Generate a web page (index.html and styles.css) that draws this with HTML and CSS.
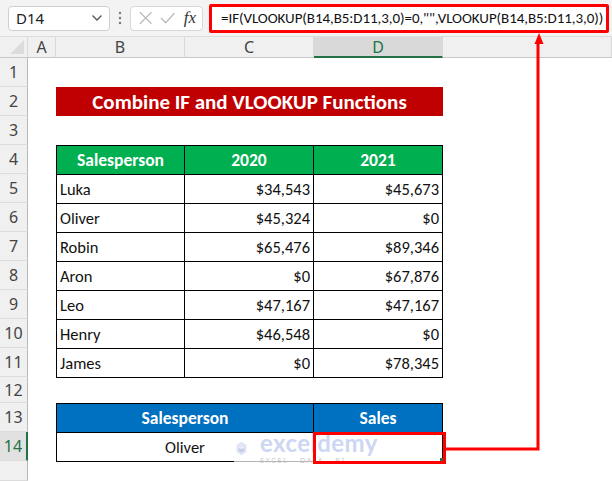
FILE: index.html
```html
<!DOCTYPE html>
<html lang="en">

<head>
  <meta charset="UTF-8">
  <meta name="viewport" content="width=device-width, initial-scale=1.0">
  <title>Combine IF and VLOOKUP Functions</title>
  <link rel="stylesheet" href="styles.css">
</head>

<body>
  <div class="app">
    <div class="toolbar">
      <div class="namebox">
        <span>D14</span>
        <svg width="12" height="8" viewBox="0 0 12 8"><path d="M1.5 1.5 L6 6 L10.5 1.5" fill="none" stroke="#555" stroke-width="1.3"/></svg>
      </div>
      <div class="grip">
        <svg width="4" height="14" viewBox="0 0 4 14"><circle cx="2" cy="2" r="1.2" fill="#777"/><circle cx="2" cy="7" r="1.2" fill="#777"/><circle cx="2" cy="12" r="1.2" fill="#777"/></svg>
      </div>
      <div class="fxbox">
        <svg width="14" height="14" viewBox="0 0 14 14"><path d="M1 1 L13 13 M13 1 L1 13" stroke="#b9b9b9" stroke-width="1.3"/></svg>
        <svg width="16" height="14" viewBox="0 0 16 14"><path d="M1 7 L6 12 L15 2" fill="none" stroke="#b9b9b9" stroke-width="1.3"/></svg>
        <span class="fx">fx</span>
      </div>
      <div class="formula">=IF(VLOOKUP(B14,B5:D11,3,0)=0,"",VLOOKUP(B14,B5:D11,3,0))</div>
    </div>

    <div class="sheet">
      <div class="corner"><svg width="14" height="14" viewBox="0 0 14 14"><path d="M14 0 L14 14 L0 14 Z" fill="#dcdcdc"/></svg></div>
      <div class="col-head">A</div>
      <div class="col-head">B</div>
      <div class="col-head">C</div>
      <div class="col-head active">D</div>
      <div class="col-head"></div>

      <div class="row-head" style="grid-row: 2">1</div>
      <div class="row-head" style="grid-row: 3">2</div>
      <div class="row-head" style="grid-row: 4">3</div>
      <div class="row-head" style="grid-row: 5">4</div>
      <div class="row-head" style="grid-row: 6">5</div>
      <div class="row-head" style="grid-row: 7">6</div>
      <div class="row-head" style="grid-row: 8">7</div>
      <div class="row-head" style="grid-row: 9">8</div>
      <div class="row-head" style="grid-row: 10">9</div>
      <div class="row-head" style="grid-row: 11">10</div>
      <div class="row-head" style="grid-row: 12">11</div>
      <div class="row-head" style="grid-row: 13">12</div>
      <div class="row-head" style="grid-row: 14">13</div>
      <div class="row-head active" style="grid-row: 15">14</div>
      <div class="row-head" style="grid-row: 16"></div>

      <div class="title">Combine IF and VLOOKUP Functions</div>

      <table class="sales">
        <tr><th>Salesperson</th><th>2020</th><th>2021</th></tr>
        <tr><td>Luka</td><td class="num">$34,543</td><td class="num">$45,673</td></tr>
        <tr><td>Oliver</td><td class="num">$45,324</td><td class="num">$0</td></tr>
        <tr><td>Robin</td><td class="num">$65,476</td><td class="num">$89,346</td></tr>
        <tr><td>Aron</td><td class="num">$0</td><td class="num">$67,876</td></tr>
        <tr><td>Leo</td><td class="num">$47,167</td><td class="num">$47,167</td></tr>
        <tr><td>Henry</td><td class="num">$46,548</td><td class="num">$0</td></tr>
        <tr><td>James</td><td class="num">$0</td><td class="num">$78,345</td></tr>
      </table>

      <table class="lookup">
        <tr><th class="wide">Salesperson</th><th>Sales</th></tr>
        <tr><td class="center">Oliver</td><td></td></tr>
      </table>
    </div>

    <!-- watermark sits over the lookup row -->
    <div class="watermark">
      <svg width="20" height="27" viewBox="0 0 20 27">
        <path d="M10 1 L19 6.5 L19 20 L10 26 L1 20 L1 6.5 Z" fill="#dfe5f5"/>
        <path d="M10 9 L15 12 L15 18 L10 21 L5 18 L5 12 Z" fill="#c4cde6"/>
        <path d="M10 9 L15 12 L10 15 L5 12 Z" fill="#eef1fa"/>
      </svg>
      <div class="brand">
        <div class="brand-name">exceldemy</div>
        <div class="brand-tag">EXCEL - DATA - BI</div>
      </div>
    </div>

    <div class="fill-handle"></div>
    <div class="callout"></div>
    <svg class="arrow" width="612" height="481" viewBox="0 0 612 481">
      <path d="M446 449 L538 449 L538 42" fill="none" stroke="#ff0000" stroke-width="3"/>
      <path d="M539 33 L543.5 44 L534.5 44 Z" fill="#ff0000"/>
    </svg>
  </div>
</body>

</html>
```

FILE: styles.css
```css
html,
body {
  margin: 0;
  padding: 0;
  background: #fff;
}

.app {
  position: relative;
  width: 612px;
  height: 481px;
  overflow: hidden;
  font-family: Carlito, Lato, "Liberation Sans", sans-serif;
}

/* formula bar */
.toolbar {
  height: 36px;
  box-sizing: border-box;
  padding-left: 8px;
  display: flex;
  align-items: center;
  background: #f3f3f3;
}

.namebox {
  width: 102px;
  height: 25px;
  box-sizing: border-box;
  padding: 0 6px 0 7px;
  display: flex;
  align-items: center;
  justify-content: space-between;
  background: #fff;
  border: 1px solid #cfcfcf;
  border-radius: 4px;
  font: 15px "Noto Sans", sans-serif;
  color: #222;
}

.grip {
  width: 20px;
  display: flex;
  justify-content: center;
}

.fxbox {
  width: 73px;
  height: 25px;
  box-sizing: border-box;
  padding: 0 6px 0 8px;
  display: flex;
  align-items: center;
  gap: 8px;
  background: #fff;
  border: 1px solid #d8d8d8;
  border-radius: 4px;
}

.fx {
  margin-left: auto;
  font: italic 17px "Liberation Serif", serif;
  color: #333;
}

.formula {
  margin-left: 6px;
  width: 400px;
  height: 29px;
  box-sizing: border-box;
  padding-left: 9px;
  display: flex;
  align-items: center;
  background: #fff;
  border: 3px solid #ff0000;
  border-radius: 2px;
  font-size: 15px;
  letter-spacing: -0.06px;
  color: #111;
  white-space: nowrap;
}

/* worksheet grid */
.sheet {
  display: grid;
  grid-template-columns: 28px 28px 129px 129px 129px 1fr;
  grid-template-rows: 22px repeat(11, 29px) 26px 29px 29px 1fr;
  height: 445px;
}

.corner,
.col-head {
  grid-row: 1;
  background: #f0f0f0;
  border-top: 1px solid #dcdcdc;
  border-bottom: 1px solid #c8c8c8;
  border-right: 1px solid #d8d8d8;
  box-sizing: border-box;
}

.corner {
  display: flex;
  align-items: flex-end;
  justify-content: flex-end;
  padding: 0 3px 3px 0;
}

.col-head {
  display: flex;
  align-items: center;
  justify-content: center;
  font: 16px "Noto Sans", sans-serif;
  color: #444;
}

.col-head.active {
  background: #d9d9d9;
  border-bottom: 2px solid #217346;
  color: #217346;
}

.row-head {
  grid-column: 1;
  display: flex;
  align-items: center;
  justify-content: center;
  box-sizing: border-box;
  background: #f0f0f0;
  border-bottom: 1px solid #dcdcdc;
  border-right: 1px solid #b9b9b9;
  font: 16px "Noto Sans", sans-serif;
  color: #444;
}

.row-head.active {
  background: #e1e1e1;
  border-right: 2px solid #217346;
  color: #217346;
}

.title {
  grid-column: 3 / 6;
  grid-row: 3;
  display: flex;
  align-items: center;
  justify-content: center;
  background: #c00000;
  color: #fff;
  font-weight: bold;
  font-size: 21px;
}

table {
  border-collapse: collapse;
  width: 100%;
  height: 100%;
  font-size: 16.5px;
  color: #111;
}

th,
td {
  border: 1px solid #000;
  padding: 0 3px;
  height: 28px;
}

th {
  color: #fff;
  font-weight: bold;
  font-size: 17.5px;
  text-align: center;
}

.sales {
  grid-column: 3 / 6;
  grid-row: 5 / 13;
}

.sales th {
  background: #00b050;
}

.sales td:first-child {
  width: 121px;
}

.num {
  text-align: right;
}

.lookup {
  grid-column: 3 / 6;
  grid-row: 14 / 16;
}

.lookup th {
  background: #0070c0;
}

.lookup .wide {
  width: 250px;
}

.center {
  text-align: center;
}

/* overlays */
.watermark {
  position: absolute;
  left: 234px;
  top: 433px;
  width: 144px;
  height: 30px;
  display: flex;
  align-items: center;
  gap: 13px;
  padding-left: 2px;
  box-sizing: border-box;
  background: rgba(255, 255, 255, 0.7);
}

.brand {
  display: flex;
  flex-direction: column;
  line-height: 1;
  margin-top: 1px;
}

.brand-name {
  font: bold 24px Lato, sans-serif;
  color: #cdd6f3;
  letter-spacing: 0.5px;
  margin-top: -4px;
}

.brand-tag {
  font: 7px "Noto Sans", sans-serif;
  color: #c4c4c4;
  letter-spacing: 1.8px;
  margin-top: -1px;
}

.fill-handle {
  position: absolute;
  left: 440px;
  top: 458px;
  width: 4px;
  height: 4px;
  background: #217346;
}

.callout {
  position: absolute;
  left: 313px;
  top: 432px;
  width: 133px;
  height: 32px;
  box-sizing: border-box;
  border: 3px solid #ff0000;
}

.arrow {
  position: absolute;
  left: 0;
  top: 0;
  pointer-events: none;
}
```
